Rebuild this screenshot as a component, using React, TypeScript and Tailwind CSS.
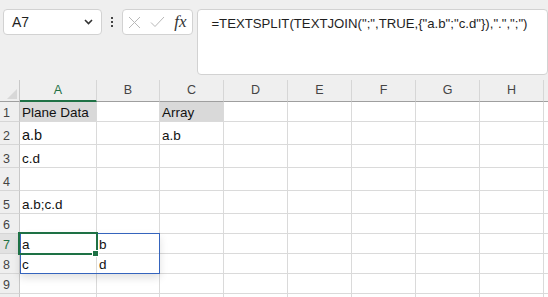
import React from 'react';

const cols = [
  { key: 'A', w: 'w-[77px]' },
  { key: 'B', w: 'w-[63px]' },
  { key: 'C', w: 'w-[64px]' },
  { key: 'D', w: 'w-[64px]' },
  { key: 'E', w: 'w-[64px]' },
  { key: 'F', w: 'w-[64px]' },
  { key: 'G', w: 'w-[64px]' },
  { key: 'H', w: 'w-[64px]' },
  { key: '', w: 'w-[64px]' },
];

type Row = { n: number; h: string; cells: Record<string, string>; gray?: string[]; big?: string[]; hideNum?: boolean };

const rows: Row[] = [
  { n: 1, h: 'h-[20px]', cells: { A: 'Plane Data', C: 'Array' }, gray: ['A', 'C'] },
  { n: 2, h: 'h-[23px]', cells: { A: 'a.b', C: 'a.b' }, big: ['A'] },
  { n: 3, h: 'h-[23px]', cells: { A: 'c.d' } },
  { n: 4, h: 'h-[23px]', cells: {} },
  { n: 5, h: 'h-[23px]', cells: { A: 'a.b;c.d' } },
  { n: 6, h: 'h-[20px]', cells: {} },
  { n: 7, h: 'h-[20px]', cells: { A: 'a', B: 'b' } },
  { n: 8, h: 'h-[20px]', cells: { A: 'c', B: 'd' } },
  { n: 9, h: 'h-[20px]', cells: {} },
  { n: 10, h: 'h-[20px]', cells: {}, hideNum: true },
];

function FormulaBar() {
  return (
    <div className="flex items-start h-[80px] pt-[9px] pl-[3px]">
      {/* name box */}
      <div className="w-[101px] h-[26px] bg-white border border-[#d2d2d2] rounded-[4px] flex items-center justify-between pl-[8px] pr-[8px]">
        <span className="text-[14px] text-[#1f1f1f] leading-none">A7</span>
        <svg width="9" height="6" viewBox="0 0 9 6">
          <path d="M1 1 L4.5 4.5 L8 1" fill="none" stroke="#333" strokeWidth="1.6" />
        </svg>
      </div>
      <div className="w-[21px] h-[26px] flex flex-col items-center justify-center gap-[2px]">
        <span className="w-[2px] h-[2px] bg-[#444]" />
        <span className="w-[2px] h-[2px] bg-[#444]" />
        <span className="w-[2px] h-[2px] bg-[#444]" />
      </div>
      <div className="w-[73px] h-[26px] bg-white border border-[#d2d2d2] rounded-[4px] flex items-center pl-[5px] gap-[9px]">
        <svg width="13" height="13" viewBox="0 0 13 13">
          <path d="M1 1 L12 12 M12 1 L1 12" stroke="#b8b8b8" strokeWidth="1" />
        </svg>
        <svg width="15" height="12" viewBox="0 0 15 12">
          <path d="M1 6.5 L5 10.5 L14 1" fill="none" stroke="#b8b8b8" strokeWidth="1" />
        </svg>
        <span className="font-['Liberation_Serif',serif] italic text-[17px] leading-none text-[#333] -mt-[2px]">fx</span>
      </div>
      <div className="ml-[4px] w-[360px] h-[66px] bg-white border border-[#d2d2d2] rounded-[4px] pl-[13px] pt-[7px]">
        <span className="block text-[13.2px] text-[#1f1f1f] leading-none whitespace-nowrap">
          =TEXTSPLIT(TEXTJOIN(";",TRUE,{"{"}"a.b";"c.d"{"}"}),".",";")
        </span>
      </div>
    </div>
  );
}

function Header() {
  return (
    <div className="flex h-[22px]">
      <div className="w-[20px] shrink-0 h-[22px] border-r border-b border-[#c8c8c8] border-b-[#9f9f9f] flex items-end justify-end pr-[2px] pb-[2px]">
        <svg width="10" height="10" viewBox="0 0 10 10">
          <path d="M10 0 L10 10 L0 10 Z" fill="#d8d8d8" />
        </svg>
      </div>
      {cols.map((c, i) => (
        <div
          key={i}
          className={`${c.w} shrink-0 h-[22px] border-r border-[#d6d6d6] flex items-center justify-center text-[12.5px] leading-none ${
            c.key === 'A' ? 'border-b-2 border-b-[#1e7145] text-[#1e7145]' : 'border-b border-b-[#9f9f9f] text-[#444]'
          }`}
        >
          {c.key}
        </div>
      ))}
    </div>
  );
}

function GridRow({ row }: { row: Row }) {
  const sel = row.n === 7;
  return (
    <div className={`flex ${row.h}`}>
      <div
        className={`w-[20px] shrink-0 border-r border-b border-[#d6d6d6] border-r-[#c8c8c8] flex items-end pb-[2px] text-[12.5px] leading-none ${
          sel ? 'bg-[#e2e2e2] text-[#1e7145]' : 'bg-[#efefef] text-[#444]'
        }`}
      >
        <span className="w-[13px] text-center">{row.hideNum ? '' : row.n}</span>
      </div>
      {cols.map((c, i) => {
        const gray = row.gray?.includes(c.key);
        const big = row.big?.includes(c.key);
        return (
          <div
            key={i}
            className={`${c.w} shrink-0 border-r border-b border-[#dadada] flex items-end pl-[2px] pb-[2px] leading-none text-[#111] whitespace-nowrap ${
              gray ? 'bg-[#d9d9d9]' : 'bg-white'
            } ${big ? 'text-[14.5px]' : 'text-[13.5px]'}`}
          >
            {c.key ? row.cells[c.key] ?? '' : ''}
          </div>
        );
      })}
    </div>
  );
}

export default function App() {
  return (
    <div className="relative w-[548px] h-[297px] overflow-hidden bg-[#efefef] font-['Liberation_Sans',Arial,sans-serif]">
      <FormulaBar />
      <Header />
      {rows.map((r) => (
        <GridRow key={r.n} row={r} />
      ))}

      {/* spill range */}
      <div className="absolute left-[20px] top-[233px] w-[140px] h-[41px] border border-[#3564bd] shadow-[0_4px_8px_rgba(0,0,0,0.12)]" />
      {/* active cell */}
      <div className="absolute left-[18px] top-[232px] w-[80px] h-[23px] border-2 border-[#1e7145]" />
      <div className="absolute left-[92px] top-[250px] w-[7px] h-[7px] bg-[#1e7145] border border-white" />
    </div>
  );
}
